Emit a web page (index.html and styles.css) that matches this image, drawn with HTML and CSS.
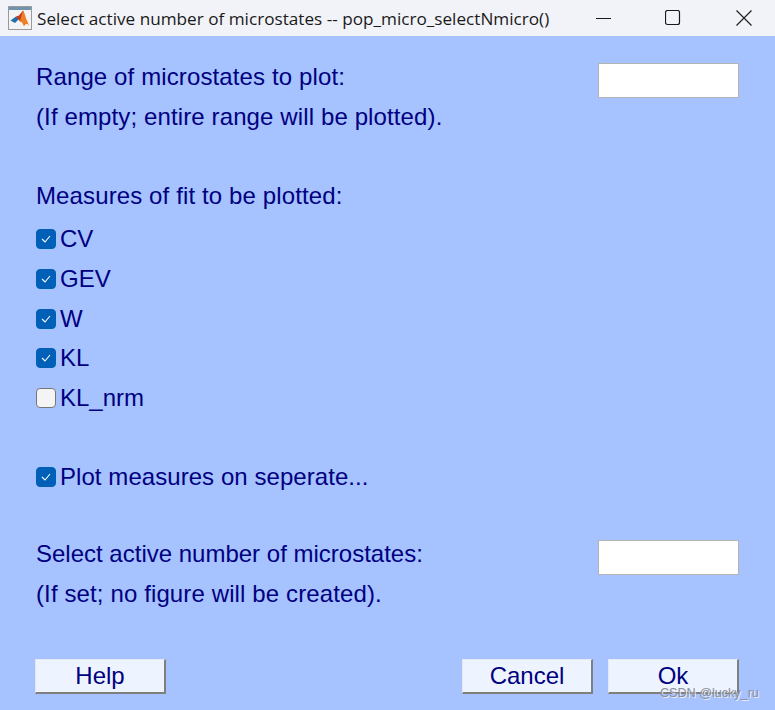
FILE: index.html
```html
<!DOCTYPE html>
<html lang="en">

<head>
  <meta charset="UTF-8" />
  <title>Select active number of microstates -- pop_micro_selectNmicro()</title>
  <link rel="stylesheet" href="styles.css">
</head>

<body>

  <div class="titlebar">
    <svg class="app-icon" width="24" height="24" viewBox="0 0 24 24">
      <rect x="0.5" y="0.5" width="23" height="23" fill="#f4f4f4" stroke="#9a9a9a" />
      <rect x="1" y="1" width="22" height="3" fill="#6f93ad" />
      <path d="M2.5 14.5 L8 10.5 L11 13 L7 17 Z" fill="#1f6fa8" />
      <path d="M8 10.5 L11 9.5 L15 4.5 L16.5 8 L12.5 16 L10 13 Z" fill="#c9391c" />
      <path d="M15 4.5 C17 8 18.5 15 21.5 19.5 C19.5 17.5 17.5 17 16 20.5 C15 17.5 13.5 15.5 12 15 Z" fill="#ee7f27" />
    </svg>
    <span class="title-text">Select active number of microstates -- pop_micro_selectNmicro()</span>
    <div class="win-controls">
      <svg class="min-btn" width="16" height="16" viewBox="0 0 16 16"><path d="M0 8.5 H15" stroke="#1a1a1a" fill="none" /></svg>
      <svg width="16" height="16" viewBox="0 0 16 16"><rect x="0.5" y="0.5" width="14" height="14" rx="2" stroke="#1a1a1a" stroke-width="1.2" fill="none" /></svg>
      <svg width="16" height="16" viewBox="0 0 16 16"><path d="M0.5 0.5 L15.5 15.5 M15.5 0.5 L0.5 15.5" stroke="#1a1a1a" stroke-width="1.1" fill="none" /></svg>
    </div>
  </div>

  <div class="dialog">

    <div class="row with-input">
      <span class="spaced">Range of microstates to plot:</span>
      <input class="edit edit-top" type="text" />
    </div>
    <div class="row spaced">(If empty; entire range will be plotted).</div>

    <div class="row spacer"></div>

    <div class="row measures-head spaced">Measures of fit to be plotted:</div>

    <label class="row check"><span class="box on"><svg width="10" height="8" viewBox="0 0 10 8"><path d="M1 4 L4 7 L9 1" /></svg></span>CV</label>
    <label class="row check"><span class="box on"><svg width="10" height="8" viewBox="0 0 10 8"><path d="M1 4 L4 7 L9 1" /></svg></span>GEV</label>
    <label class="row check"><span class="box on"><svg width="10" height="8" viewBox="0 0 10 8"><path d="M1 4 L4 7 L9 1" /></svg></span>W</label>
    <label class="row check"><span class="box on"><svg width="10" height="8" viewBox="0 0 10 8"><path d="M1 4 L4 7 L9 1" /></svg></span>KL</label>
    <label class="row check"><span class="box"></span>KL_nrm</label>

    <div class="row spacer"></div>

    <label class="row check plot-check"><span class="box on"><svg width="10" height="8" viewBox="0 0 10 8"><path d="M1 4 L4 7 L9 1" /></svg></span>Plot measures on seperate...</label>

    <div class="row with-input select-row">
      <span>Select active number of microstates:</span>
      <input class="edit edit-bottom" type="text" />
    </div>
    <div class="row spaced">(If set; no figure will be created).</div>

    <div class="buttons">
      <button class="btn">Help</button>
      <div class="btn-group">
        <button class="btn">Cancel</button>
        <button class="btn">Ok</button>
      </div>
    </div>

  </div>

  <div class="watermark">CSDN @lucky_ru</div>

</body>

</html>
```

FILE: styles.css
```css
* {
  box-sizing: border-box;
}

html,
body {
  margin: 0;
  height: 100%;
}

body {
  position: relative;
  width: 775px;
  height: 710px;
  overflow: hidden;
  background: #a6c2ff;
  font-family: "Liberation Sans", Arial, sans-serif;
  color: #000080;
}

.titlebar {
  display: flex;
  align-items: center;
  height: 36px;
  padding-left: 8px;
  background: #f2f3f8;
  color: #1a1a1a;
}

.app-icon {
  flex: none;
  margin-right: 5px;
}

.title-text {
  font-family: "Open Sans", "Noto Sans", sans-serif;
  font-size: 17.17px;
  white-space: nowrap;
}

.win-controls {
  display: flex;
  align-items: center;
  gap: 55px;
  margin-left: auto;
  padding-right: 23px;
}

.min-btn {
  margin-right: -2px;
}

.dialog {
  padding: 21px 36px 0;
}

.row {
  display: flex;
  align-items: center;
  height: 39.7px;
  font-size: 24px;
  white-space: nowrap;
}

.spaced {
  letter-spacing: 0.12px;
}

.plot-check {
  letter-spacing: 0.06px;
}

.with-input {
  justify-content: space-between;
}

.measures-head {
  margin-bottom: 3.6px;
}

.select-row {
  margin-top: 36.9px;
}

.edit {
  width: 141px;
  height: 35px;
  border: 1px solid #b4b4b4;
  background: #fff;
  outline: none;
}

.edit-top {
  margin-top: 8px;
}

.edit-bottom {
  margin-top: 7px;
}

.check {
  gap: 4px;
}

.box {
  display: flex;
  align-items: center;
  justify-content: center;
  width: 20px;
  height: 20px;
  border: 1px solid #767676;
  border-radius: 4px;
  background: #f4f4f4;
}

.box.on {
  border-color: #0060b8;
  background: #0060b8;
}

.box svg path {
  fill: none;
  stroke: #fff;
  stroke-width: 1.1;
}

.buttons {
  display: flex;
  justify-content: space-between;
  margin-top: 45.5px;
  margin-left: -1px;
}

.btn-group {
  display: flex;
  gap: 15px;
}

.btn {
  width: 131px;
  height: 35px;
  padding: 0;
  border: 1px solid;
  border-color: #e4e8f0 #7f7f7f #7f7f7f #e4e8f0;
  border-width: 1px 2px 2px 1px;
  background: #edf4ff;
  font-family: "Liberation Sans", Arial, sans-serif;
  font-size: 24px;
  color: #000080;
}

.watermark {
  position: absolute;
  top: 686px;
  left: 660px;
  font-size: 12.6px;
  color: #8a8f9c;
  text-shadow: 1px 1px 0 #e8ecf4;
  white-space: nowrap;
}
```
